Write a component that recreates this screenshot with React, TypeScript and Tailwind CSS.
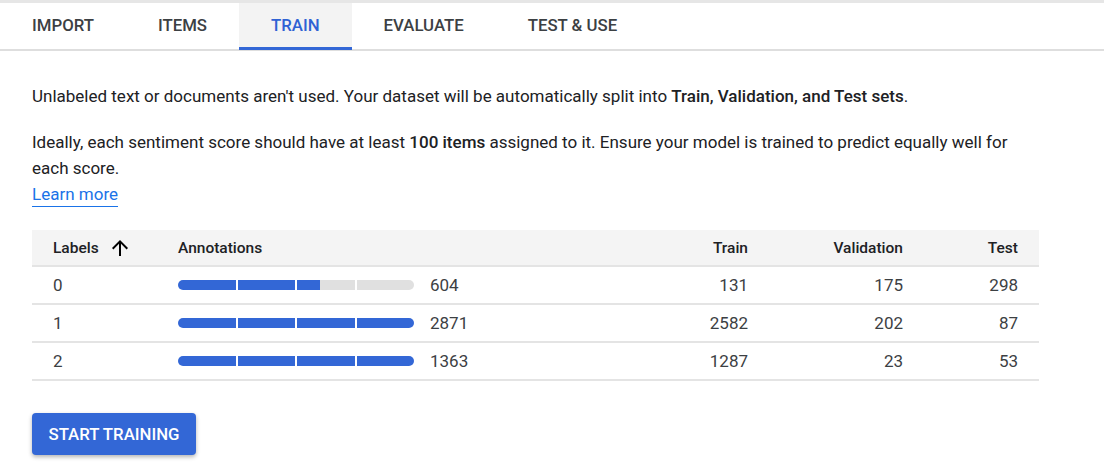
import React from "react";

const tabs = ["IMPORT", "ITEMS", "TRAIN", "EVALUATE", "TEST & USE"];

const rows = [
  { label: "0", fill: [1, 1, 0.4, 0], count: "604", train: "131", val: "175", test: "298" },
  { label: "1", fill: [1, 1, 1, 1], count: "2871", train: "2582", val: "202", test: "87" },
  { label: "2", fill: [1, 1, 1, 1], count: "1363", train: "1287", val: "23", test: "53" },
];

function Bar({ fill }: { fill: number[] }) {
  return (
    <div className="flex w-[236px] h-[10px] gap-[2px]">
      {fill.map((f, i) => (
        <div
          key={i}
          className={
            "flex-1 h-full bg-[#e0e0e0] overflow-hidden flex " +
            (i === 0 ? "rounded-l-full " : "") +
            (i === 3 ? "rounded-r-full" : "")
          }
        >
          <div className="h-full bg-[#3367d6]" style={{ width: `${f * 100}%` }} />
        </div>
      ))}
    </div>
  );
}

export default function App() {
  return (
    <div
      className="w-[1104px] h-[476px] bg-white overflow-hidden text-[#3c4043]"
      style={{ fontFamily: "Roboto, 'Liberation Sans', sans-serif" }}
    >
      <div className="h-[3px] bg-[#e6e6e6]" />
      <div className="flex h-[48px] border-b-2 border-[#dedede]">
        {tabs.map((t) => {
          const active = t === "TRAIN";
          return (
            <div
              key={t}
              className={
                "px-8 flex items-center text-[16.8px] font-medium relative " +
                (active ? "bg-[#f3f3f3] text-[#2f62d4]" : "text-[#3c4043]")
              }
            >
              {t}
              {active && <div className="absolute left-0 right-0 bottom-[-1px] h-[3px] bg-[#3367d6]" />}
            </div>
          );
        })}
      </div>

      <div className="pl-8 pt-[32px] text-[17px] leading-[26px] text-[#202124]">
        <p>
          Unlabeled text or documents aren't used. Your dataset will be automatically split into{" "}
          <span className="font-medium">Train, Validation, and Test sets</span>.
        </p>
        <p className="mt-[20px] w-[1010px]">
          Ideally, each sentiment score should have at least <span className="font-medium">100 items</span> assigned
          to it. Ensure your model is trained to predict equally well for each score.
        </p>
        <a className="text-[#1a73e8] border-b border-[#1a73e8] leading-[23px] inline-block">Learn more</a>

        <div className="mt-[23px] w-[1007px]">
          <div className="flex items-center h-[37px] bg-[#f4f4f4] text-[15.5px] font-medium text-[#202124] border-b-2 border-[#e4e4e4]">
            <div className="w-[146px] pl-[21px] flex items-center gap-[9px]">
              Labels
              <svg width="24" height="24" viewBox="0 0 24 24" className="mt-[1px]">
                <path d="M4 12l1.41 1.41L11 7.83V20h2V7.83l5.58 5.59L20 12l-8-8-8 8z" fill="#000" />
              </svg>
            </div>
            <div className="w-[340px]">Annotations</div>
            <div className="w-[230px] text-right">Train</div>
            <div className="w-[155px] text-right">Validation</div>
            <div className="w-[115px] text-right">Test</div>
          </div>
          {rows.map((r) => (
            <div key={r.label} className="flex items-center h-[38px] border-b-2 border-[#e4e4e4] text-[17px] text-[#3c4043]">
              <div className="w-[146px] pl-[21px]">{r.label}</div>
              <div className="w-[340px] flex items-center gap-[16px]">
                <Bar fill={r.fill} />
                <span>{r.count}</span>
              </div>
              <div className="w-[230px] text-right">{r.train}</div>
              <div className="w-[155px] text-right">{r.val}</div>
              <div className="w-[115px] text-right">{r.test}</div>
            </div>
          ))}
        </div>

        <button className="mt-[32px] h-[42px] w-[164px] rounded-[4px] bg-[#3367d6] text-white text-[16.8px] font-medium shadow-[0_2px_4px_rgba(0,0,0,0.3)]">
          START TRAINING
        </button>
      </div>
    </div>
  );
}
